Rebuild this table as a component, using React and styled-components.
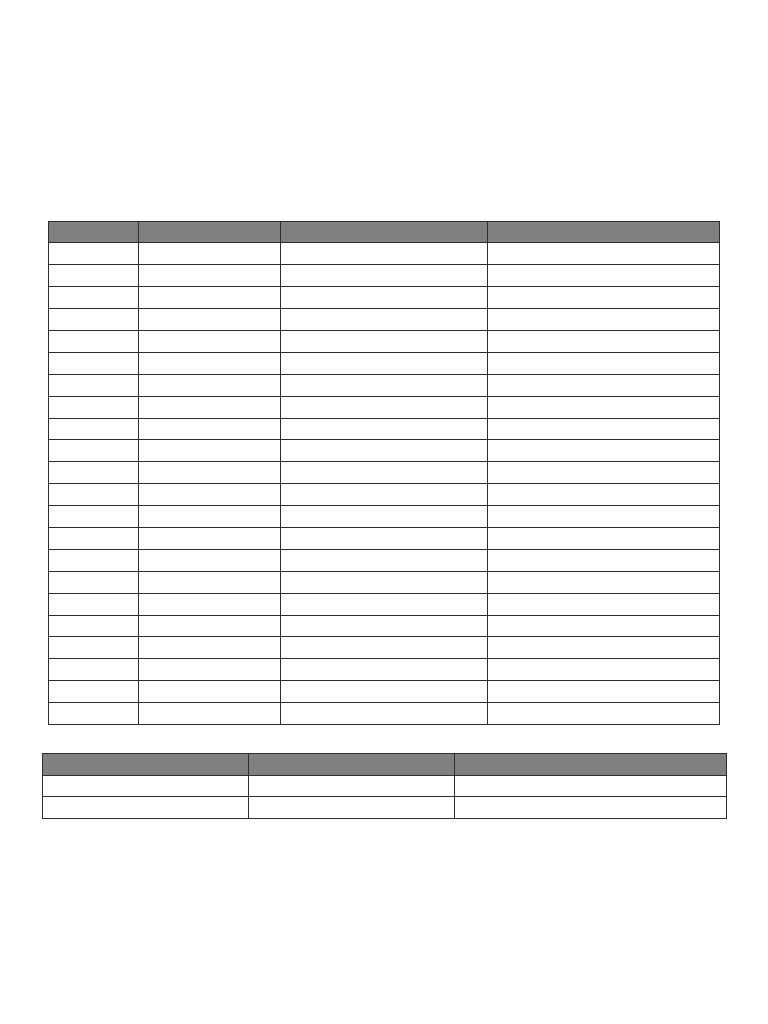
import React from 'react';
import styled, { createGlobalStyle } from 'styled-components';

const GlobalStyle = createGlobalStyle`
  html, body {
    margin: 0;
    padding: 0;
    background: #ffffff;
    font-family: "Liberation Sans", Arial, sans-serif;
  }
`;

const Page = styled.div`
  width: 768px;
  height: 1024px;
  padding-top: 220.5px;
  box-sizing: border-box;
  display: flex;
  flex-direction: column;
`;

const Table = styled.table`
  border-collapse: collapse;
  table-layout: fixed;
  width: ${p => p.$width}px;
  margin-left: ${p => p.$left}px;
  margin-top: ${p => p.$top || 0}px;
  border: 1px solid #2e2e2e;
`;

const HeadCell = styled.th`
  background: #808080;
  border: 1px solid #2e2e2e;
  height: ${p => p.$h}px;
  padding: 0;
`;

const Cell = styled.td`
  border: 1px solid #2e2e2e;
  height: ${p => p.$h}px;
  padding: 0;
`;

const mainCols = [90, 142, 207, 232];
const summaryCols = [206, 206, 272];

function Grid({ cols, rows, rowH, left, top }) {
  const width = cols.reduce((a, b) => a + b, 0);
  return (
    <Table $width={width} $left={left} $top={top}>
      <colgroup>
        {cols.map((w, i) => <col key={i} style={{ width: w }} />)}
      </colgroup>
      <thead>
        <tr>
          {cols.map((_, i) => <HeadCell key={i} $h={rowH} />)}
        </tr>
      </thead>
      <tbody>
        {Array.from({ length: rows }).map((_, r) => (
          <tr key={r}>
            {cols.map((_, i) => <Cell key={i} $h={rowH} />)}
          </tr>
        ))}
      </tbody>
    </Table>
  );
}

export default function App() {
  return (
    <>
      <GlobalStyle />
      <Page>
        <Grid cols={mainCols} rows={22} rowH={20.9} left={48} />
        <Grid cols={summaryCols} rows={2} rowH={20.7} left={42} top={28} />
      </Page>
    </>
  );
}
